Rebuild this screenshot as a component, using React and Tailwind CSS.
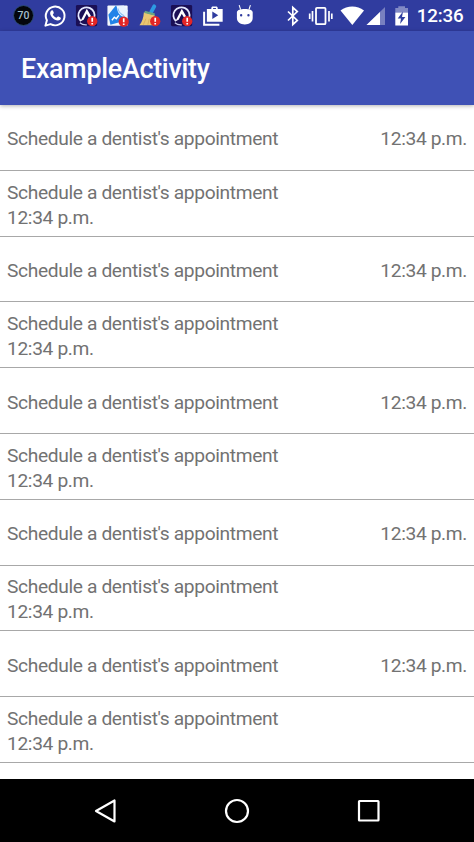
import React from "react";

const reminders = Array.from({ length: 10 }, (_, index) => ({
  id: index,
  title: "Schedule a dentist's appointment",
  time: "12:34 p.m.",
  stacked: index % 2 === 1,
}));

const AlertBadge = ({ cx, cy }) => (
  <g>
    <circle cx={cx} cy={cy} r="5.2" fill="#e32626" />
    <path
      d={`M${cx} ${cy - 3.4}v4M${cx} ${cy + 1.7}v1.7`}
      stroke="#fff"
      strokeWidth="1.7"
    />
  </g>
);

const NotificationIcon = ({ children }) => (
  <svg viewBox="0 0 32 32" className="h-[31.6px] w-[31.6px] shrink-0">
    {children}
  </svg>
);

const TemperatureIcon = () => (
  <div className="flex h-[31.6px] w-[31.6px] shrink-0 items-center justify-center">
    <div className="flex h-[21px] w-[21px] items-center justify-center rounded-full border border-[#2c4a78] bg-[#04060c] pt-px text-[10.5px] leading-none font-medium text-[#a3bfce]">
      70
    </div>
  </div>
);

const WhatsAppIcon = () => (
  <NotificationIcon>
    <path
      d="M6.5 26l1.5-5.4a9.5 9.5 0 1 1 3.7 3.8z"
      fill="none"
      stroke="#fff"
      strokeWidth="2"
      strokeLinejoin="round"
    />
    <path
      d="M12.7 10.7c.5-.5 1.2-.4 1.5.2l.8 1.9c.1.4 0 .7-.3 1l-.7.8c.8 1.7 2 2.8 3.8 3.5l1-1.2c.3-.3.6-.4 1-.2l1.9.9c.5.3.6.6.4 1.2-.4 1.5-1.7 2.1-3.1 2-3.9-.5-7.4-4-7.7-7.2-.1-1.2.5-2.2 1.4-2.9z"
      fill="#fff"
    />
  </NotificationIcon>
);

const NavigatorIcon = () => (
  <NotificationIcon>
    <rect x="5" y="5" width="21.5" height="21.5" rx="1.5" fill="#1a0f55" />
    <path
      d="M10 21.5a8.2 8.2 0 1 1 13.5-3.5"
      fill="none"
      stroke="#e4e9ff"
      strokeWidth="1.8"
    />
    <path d="M9.5 21.5L16 8.8l4.5 8-2.5.7-2-3.5-3.2 6z" fill="#fff" />
    <path d="M9 23c2 1.8 4.5 2.5 7 2.2" fill="none" stroke="#c4c9f0" strokeWidth="1.3" />
    <AlertBadge cx={21.5} cy={21.5} />
  </NotificationIcon>
);

const SatelliteIcon = () => (
  <NotificationIcon>
    <rect x="5.5" y="5.5" width="20.5" height="20.5" rx="1" fill="#f4f8fc" />
    <path d="M6.5 15l7.500-9.500 9.500 11-4 5.500-11 3z" fill="#2183e8" />
    <path d="M15 6l7-.5 4 5-1.500 6-3 .5c-3.500-1-6.500-5-6.500-11z" fill="#e8f3ff" />
    <path d="M16 8.500c1 4 3 6 6.500 7.500" fill="none" stroke="#8ec2f4" strokeWidth="1.2" />
    <path d="M10 20.500l2.500-3 2 1.500 2.500-3.500" fill="none" stroke="#fff" strokeWidth="1.4" />
    <AlertBadge cx={22} cy={22} />
  </NotificationIcon>
);

const BroomIcon = () => (
  <NotificationIcon>
    <path d="M20.500 6.500L17.500 12" stroke="#2d9be2" strokeWidth="4" strokeLinecap="round" />
    <path d="M10 12.500l11 3-1.500 10H5.500c2.500-3 4.200-7 4.500-13z" fill="#e9c672" />
    <path d="M9.500 25l2.500-6M14 25l1.500-6" stroke="#d9ae5c" strokeWidth="1" />
    <path d="M10.800 12l10.200 2.700" stroke="#6aa583" strokeWidth="2.2" />
    <AlertBadge cx={21.5} cy={21.5} />
  </NotificationIcon>
);

const MediaIcon = () => (
  <NotificationIcon>
    <path d="M7.200 12v13h15.500" fill="none" stroke="#fff" strokeWidth="2" />
    <path
      fillRule="evenodd"
      d="M14.500 9V8.200c0-1 .6-1.700 1.600-1.700h3.300c1 0 1.600.7 1.600 1.700V9h5v13H10V9zm1.800 0h2.900v-.8h-2.900zM15.500 11.700v7.500l6-3.750z"
      fill="#fff"
    />
  </NotificationIcon>
);

const AndroidIcon = () => (
  <NotificationIcon>
    <path d="M10.300 5.200l1.500 4.500M21.700 5.200l-1.500 4.500" stroke="#fff" strokeWidth="1.1" />
    <path
      fillRule="evenodd"
      d="M8 12.500C8 10 11.500 9 16 9s8 1 8 3.500v5.700c0 4-3.500 6.500-8 6.500s-8-2.500-8-6.500zM12.300 14.200a1.200 1.200 0 1 0 0 2.400 1.200 1.200 0 0 0 0-2.400zm7.400 0a1.200 1.200 0 1 0 0 2.400 1.200 1.200 0 0 0 0-2.400z"
      fill="#fff"
    />
  </NotificationIcon>
);

const SystemIcons = () => (
  <svg viewBox="284 0 126 31" className="h-[31px] w-[126px] shrink-0">
    <path
      d="M287 11.500l9.300 9-4.500 4V7.500l4.500 4-9.300 9"
      fill="none"
      stroke="#fff"
      strokeWidth="1.7"
    />
    <rect x="315" y="7.800" width="9.500" height="16.400" rx="1" fill="none" stroke="#fff" strokeWidth="1.8" />
    <path
      d="M311.500 11v10.500M308.700 13.500v5.500M328 11v10.500M330.800 13.500v5.500"
      stroke="#fff"
      strokeWidth="1.7"
    />
    <path d="M339.500 10.500c6.800-5.500 16.700-5.500 23.500 0L351.300 25z" fill="#fff" />
    <path d="M384 7v18h-18.500z" fill="#fff" opacity=".35" />
    <path d="M379 12v13h-13.500z" fill="#fff" />
    <path d="M394.300 8h3V6.200h6.700V8h3v4.500h-12.700z" fill="#fff" opacity=".4" />
    <path d="M394.300 12.500h12.700V25.500h-12.700z" fill="#fff" />
    <path d="M402 11.500l-5.300 7h3.300l-.9 5.500 5.300-7h-3.400z" fill="#303f9f" />
  </svg>
);

const StatusBar = () => (
  <div className="flex h-[31px] items-center bg-[#303c9f] pl-[7.7px] text-white">
    <TemperatureIcon />
    <WhatsAppIcon />
    <NavigatorIcon />
    <SatelliteIcon />
    <BroomIcon />
    <NavigatorIcon />
    <MediaIcon />
    <AndroidIcon />
    <div className="ml-auto flex items-center pr-[10.5px]">
      <SystemIcons />
      <span className="ml-[6px] pt-[2px] text-[18.8px] leading-none font-medium tracking-[-0.2px]">
        12:36
      </span>
    </div>
  </div>
);

const AppBar = ({ title }) => (
  <div className="relative z-10 flex h-[74px] items-center bg-[#3f51b5] pt-[3px] pl-[21px] shadow-[0_1px_4px_rgba(0,0,0,0.3)]">
    <h1 className="text-[26.8px] leading-none font-medium tracking-[-0.25px] text-white">{title}</h1>
  </div>
);

const ReminderRow = ({ title, time, stacked }) => (
  <li
    className={
      stacked
        ? "flex h-[65.8px] flex-col justify-center border-b border-[#a8a8a8] px-[7px] pt-[3px] leading-[25px]"
        : "flex h-[65.8px] items-center justify-between border-b border-[#a8a8a8] px-[7px] pt-[3px] leading-[25px]"
    }
  >
    <span>{title}</span>
    <span>{time}</span>
  </li>
);

const NavigationBar = () => (
  <div className="flex h-[63px] shrink-0 items-center justify-center gap-[99.5px] bg-black">
    <svg viewBox="0 0 32 32" className="h-8 w-8" fill="none" stroke="#fff" strokeWidth="2.2">
      <path d="M6 16L24.500 5.500v21z" strokeLinejoin="round" />
    </svg>
    <svg viewBox="0 0 32 32" className="h-8 w-8" fill="none" stroke="#fff" strokeWidth="2.2">
      <circle cx="16" cy="16" r="11" />
    </svg>
    <svg viewBox="0 0 32 32" className="h-8 w-8" fill="none" stroke="#fff" strokeWidth="2.2">
      <rect x="6" y="6" width="19.5" height="19.5" rx=".5" />
    </svg>
  </div>
);

const App = () => (
  <div className="flex h-screen w-full flex-col overflow-hidden bg-white font-[Roboto,sans-serif]">
    <StatusBar />
    <AppBar title="ExampleActivity" />
    <ul className="flex-1 overflow-hidden text-[19.2px] tracking-[-0.36px] text-[#727272]">
      {reminders.map((reminder) => (
        <ReminderRow key={reminder.id} {...reminder} />
      ))}
    </ul>
    <NavigationBar />
  </div>
);

export default App;
